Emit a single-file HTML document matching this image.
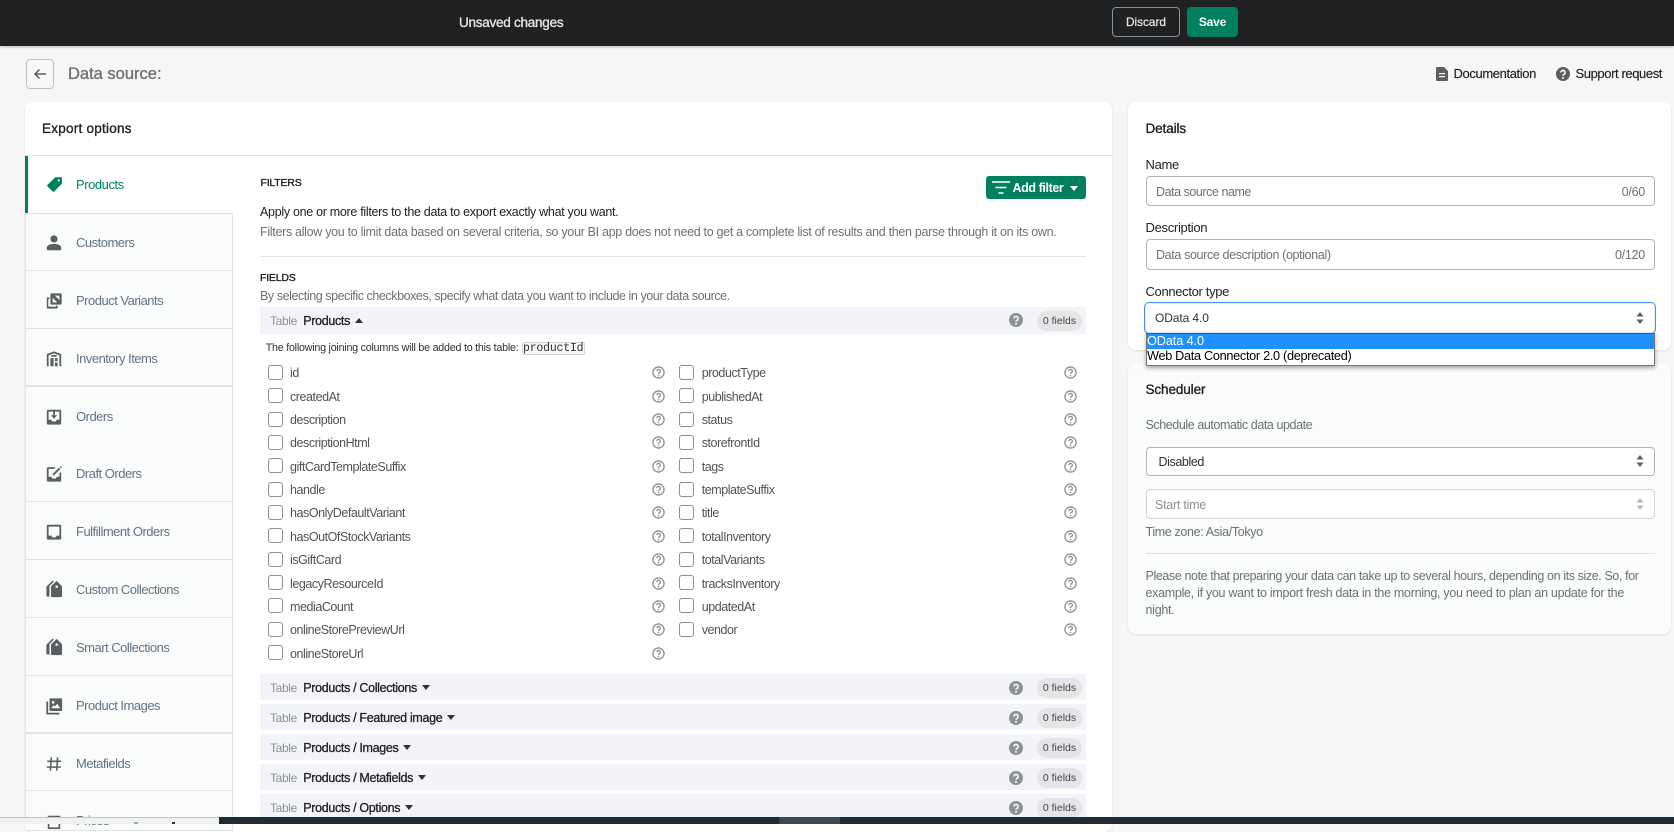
<!DOCTYPE html>
<html><head><meta charset="utf-8"><style>
html,body{margin:0;padding:0;width:1674px;height:824px;overflow:hidden;background:#f6f6f7;font-family:"Liberation Sans",sans-serif;font-size:13px;color:#202223}
*{box-sizing:border-box}
.a,.t,.r,.n,svg.i{position:absolute}
.t{white-space:nowrap;line-height:16px;letter-spacing:-.35px}
.m{-webkit-text-stroke:.35px currentColor}
.g{color:#6d7175}
.bar{left:0;top:0;width:1674px;height:46px;background:#202123;box-shadow:0 1px 3px rgba(0,0,0,.25)}
.card{background:#fff;border-radius:8px;box-shadow:0 1px 2px rgba(0,0,0,.1)}
.n{left:26px;width:207px;height:58px;background:#fafbfb;border:1px solid #e1e3e5;border-top:0;border-left:0}
.n span{position:absolute;left:50px;top:22px;line-height:16px;color:#637381;letter-spacing:-.5px;white-space:nowrap}
.n svg{position:absolute;left:19px;top:21px;width:18px;height:18px;fill:#5c5f62}
.r{height:16px;width:10px}
.l{left:267.6px}.q{left:679.3px}
.r i{position:absolute;left:0;top:-.5px;width:15px;height:15px;border:1px solid #8c9196;border-radius:3px;background:#fff}
.r span{position:absolute;left:22.4px;top:0;line-height:16px;white-space:nowrap;color:#4f5358;font-size:12.5px;letter-spacing:-.44px}
.r svg{position:absolute;top:1px;left:384.5px;width:13px;height:13px}
.th{left:259.5px;width:826.5px;background:#f3f4f8}
.th .x{position:absolute;left:10.5px;line-height:16px;color:#8c9196;font-size:12px;letter-spacing:-.35px}
.th .b{position:absolute;left:43.8px;line-height:16px;white-space:nowrap;color:#202223;letter-spacing:-.33px;font-size:12.5px;-webkit-text-stroke:.3px #202223}
.th .b b{display:inline-block;width:0;height:0;border:4px solid transparent;border-top:5px solid #303236;border-bottom:0;margin-left:5px;vertical-align:2px}
.th .b b.u{border-top:0;border-bottom:5px solid #303236}
.th svg{position:absolute;left:749px;width:14px;height:14px}
.th .p{position:absolute;left:777.5px;width:45px;height:20px;border-radius:10px;background:#e4e5e7;text-align:center;font-size:10.5px;line-height:20px;color:#44474a}
.inp{background:#fff;border:1px solid #aeb4b9;border-radius:4px}
.sa{position:absolute;width:8px;height:14px}
</style></head><body>
<svg width="0" height="0" style="position:absolute"><defs>
<symbol id="h" viewBox="0 0 14 14"><circle cx="7" cy="7" r="6" fill="none" stroke="#8c9196" stroke-width="1.4"/><path d="M5.2 5.6a1.9 1.9 0 1 1 2.8 1.6c-.7.4-1 .7-1 1.4" fill="none" stroke="#8c9196" stroke-width="1.3"/><circle cx="7" cy="10.4" r=".85" fill="#8c9196"/></symbol>
<symbol id="f" viewBox="0 0 14 14"><circle cx="7" cy="7" r="7" fill="#8c9196"/><path d="M4.9 5.5a2.1 2.1 0 1 1 3.2 1.8c-.7.4-1.1.7-1.1 1.500" fill="none" stroke="#fff" stroke-width="1.5"/><circle cx="7" cy="10.9" r="1" fill="#fff"/></symbol>
<symbol id="cc" viewBox="0 0 20 20"><path d="M8 1L1.500 7.500V17A1.500 1.500 0 0 0 3 18.500H5V6.500L10 1.500 9 1z"/><path d="M13 1l5.900 6v10.500a1.500 1.500 0 0 1-1.500 1.500H8.200a1.500 1.500 0 0 1-1.500-1.500V7zM13 6a1.400 1.400 0 1 0 0 2.800A1.400 1.400 0 0 0 13 6z" fill-rule="evenodd"/></symbol>
</defs></svg>

<div class="a bar"></div>
<div class="t m" style="left:459px;top:15px;color:#e3e4e6;font-size:13.5px;letter-spacing:-.25px">Unsaved changes</div>
<div class="a" style="left:1112px;top:7px;width:68px;height:30px;border:1px solid #8c9196;border-radius:4px;color:#e3e4e6;text-align:center;line-height:28px;font-size:11.8px;-webkit-text-stroke:.25px #e3e4e6">Discard</div>
<div class="a" style="left:1187px;top:7px;width:51px;height:30px;background:#008060;border-radius:4px;color:#fff;text-align:center;line-height:30px;font-size:12px;font-weight:bold;letter-spacing:-.2px">Save</div>

<div class="a" style="left:26px;top:59px;width:28px;height:30px;border:1px solid #babfc3;border-radius:4px;background:#f8f8f8"></div>
<svg class="i" style="left:32px;top:66px" width="16" height="16" viewBox="0 0 16 16"><path d="M14 8H3M7.500 3.500L3 8l4.500 4.500" fill="none" stroke="#5c5f62" stroke-width="1.500"/></svg>
<div class="t m g" style="left:68px;top:65px;font-size:16.500px;line-height:18px;letter-spacing:0">Data source:</div>

<svg class="i" style="left:1434px;top:66px" width="16" height="16" viewBox="0 0 16 16"><path d="M3 1h7l4 4v9a1 1 0 0 1-1 1H3a1 1 0 0 1-1-1V2a1 1 0 0 1 1-1zM5 7v1.300h6V7zM5 10v1.300h6V10z" fill="#5c5f62" fill-rule="evenodd"/></svg>
<div class="t" style="left:1453.500px;top:66px;letter-spacing:-.38px;-webkit-text-stroke:.15px #202223">Documentation</div>
<svg class="i" style="left:1556px;top:67px" width="14" height="14" viewBox="0 0 14 14"><circle cx="7" cy="7" r="7" fill="#5c5f62"/><path d="M4.900 5.500a2.100 2.100 0 1 1 3.200 1.800c-.7.4-1.100.7-1.100 1.500" fill="none" stroke="#fff" stroke-width="1.500"/><circle cx="7" cy="10.900" r="1" fill="#fff"/></svg>
<div class="t" style="left:1575.500px;top:66px;letter-spacing:-.4px;-webkit-text-stroke:.15px #202223">Support request</div>

<!-- Export card -->
<div class="a card" style="left:25px;top:102px;width:1087px;height:730px"></div>
<div class="t m" style="left:42px;top:121px;font-size:13.500px;letter-spacing:.25px">Export options</div>
<div class="a" style="left:25px;top:155px;width:1087px;height:1px;background:#e1e3e5"></div>
<div class="a" style="left:25px;top:156px;width:1px;height:661px;background:#e1e3e5"></div>

<!-- Sidebar -->
<div class="a" style="left:25px;top:156px;width:3px;height:57px;background:#008060"></div>
<svg class="i" style="left:46px;top:176px" width="17" height="17" viewBox="0 0 20 20"><path d="M11.500 1.500H18a.7.700 0 0 1 .7.7v6.500a1 1 0 0 1-.3.7l-9 9a1 1 0 0 1-1.400 0L1.600 12a1 1 0 0 1 0-1.400l9-8.800a1 1 0 0 1 .9-.3zM15 4a1.300 1.300 0 1 0 0 2.600A1.300 1.300 0 0 0 15 4z" fill="#008060" fill-rule="evenodd"/></svg>
<div class="t" style="left:76px;top:176.500px;color:#008060;letter-spacing:-.45px">Products</div>

<div class="n" style="top:213px;height:58px;border-top:1px solid #e1e3e5"><span style="top:21px">Customers</span><svg style="top:20px" viewBox="0 0 20 20"><circle cx="10" cy="5.500" r="4"/><path d="M3 18a1 1 0 0 1-1-1v-1.500C2 13 5 11 10 11s8 2 8 4.500V17a1 1 0 0 1-1 1z"/></svg></div>
<div class="n" style="top:271px"><span>Product Variants</span><svg viewBox="0 0 20 20"><path d="M7 1.500h10.500a1 1 0 0 1 1 1V13a1 1 0 0 1-1 1H7a1 1 0 0 1-1-1V2.500a1 1 0 0 1 1-1z"/><path d="M16 4v5l-5-5zM8.500 11.500v-5l5 5z" fill="#fafbfb"/><path d="M3 6h2v1.700H3.700v8.600h8.600V15H14v2.500a1 1 0 0 1-1 1H3a1 1 0 0 1-1-1V7a1 1 0 0 1 1-1z"/></svg></div>
<div class="n" style="top:329px;border-bottom-width:2px"><span>Inventory Items</span><svg viewBox="0 0 20 20"><path d="M10 1.500L18 4.500V18h-2V6L10 3.700 4 6v12H2V4.500zM6 9h3.500v9H6zM11 9h3v3.500h-3zM11 14h3v4h-3zM7 5.500h6V7.500H7z"/></svg></div>
<div class="n" style="top:387px"><span>Orders</span><svg viewBox="0 0 20 20"><path d="M3.500 2h13A1.500 1.500 0 0 1 18 3.500V17a1.500 1.500 0 0 1-1.500 1.500h-13A1.500 1.500 0 0 1 2 17V3.500A1.500 1.500 0 0 1 3.500 2zM4 4v9h3l1 2h4l1-2h3V4z" fill-rule="evenodd"/><path d="M9 3h2v5h2.500L10 12 6.500 8H9z"/></svg></div>
<div class="n" style="top:444px"><span>Draft Orders</span><svg viewBox="0 0 20 20"><path d="M3.500 2.500H12L10 4.500H4V13h3l1 2h4l1-2h3V9.500l2-2V17a1.500 1.500 0 0 1-1.500 1.500h-13A1.500 1.500 0 0 1 2 17V4a1.500 1.500 0 0 1 1.500-1.500zM15.500 3L17 4.500 10 11.500H8.500V10zM17.500 1l1.500 1.500-1 1L16.500 2z" fill-rule="evenodd"/></svg></div>
<div class="n" style="top:502px"><span>Fulfillment Orders</span><svg viewBox="0 0 20 20"><path d="M3.500 2h13A1.500 1.500 0 0 1 18 3.500V17a1.500 1.500 0 0 1-1.500 1.500h-13A1.500 1.500 0 0 1 2 17V3.500A1.500 1.500 0 0 1 3.500 2zM4 4v10h3l1 2h4l1-2h3V4z" fill-rule="evenodd"/></svg></div>
<div class="n" style="top:560px"><span>Custom Collections</span><svg style="top:20px"><use href="#cc"/></svg></div>
<div class="n" style="top:618px"><span>Smart Collections</span><svg style="top:20px"><use href="#cc"/></svg></div>
<div class="n" style="top:676px;border-bottom-width:2px"><span>Product Images</span><svg viewBox="0 0 20 20"><path d="M6 1.500h12a1 1 0 0 1 1 1v12a1 1 0 0 1-1 1H6a1 1 0 0 1-1-1v-12a1 1 0 0 1 1-1zM7 12.500h10l-3.500-5-2.500 3-1.500-1.500zM9 4.500a1.500 1.500 0 1 0 0 3 1.500 1.500 0 0 0 0-3zM1.500 5h2v12.500H16v2H2.500a1 1 0 0 1-1-1z" fill-rule="evenodd"/></svg></div>
<div class="n" style="top:734px;height:57px"><span>Metafields</span><svg viewBox="0 0 20 20"><path d="M7 2.500l-1 15M14 2.500l-1 15M2.500 7h15.500M2 13.500h15.500" fill="none" stroke="#5c5f62" stroke-width="1.700"/></svg></div>
<div class="n" style="top:791px;height:40px"><span>Prices</span><svg viewBox="0 0 20 20"><path d="M4 5h12v13H4z" fill="none" stroke="#5c5f62" stroke-width="1.800"/></svg></div>

<!-- Filters -->
<div class="t m" style="left:260.500px;top:175px;font-size:10.500px;letter-spacing:-.2px">FILTERS</div>
<div class="a" style="left:986px;top:176px;width:100px;height:23px;background:#008060;border-radius:3px"></div>
<svg class="i" style="left:992px;top:181px" width="18" height="13" viewBox="0 0 18 13"><path d="M0 1h18M3.500 6.500h11M6.500 12h5" stroke="#fff" stroke-width="1.600" fill="none"/></svg>
<div class="t" style="left:1012.500px;top:179.500px;color:#fff;font-weight:bold;font-size:12.500px;letter-spacing:-.4px">Add filter</div>
<div class="a" style="left:1070px;top:186px;border:4px solid transparent;border-top:5px solid #fff;border-bottom:0"></div>
<div class="t" style="left:260px;top:204px;letter-spacing:-.3px;font-size:12.500px">Apply one or more filters to the data to export exactly what you want.</div>
<div class="t g" style="left:260px;top:224px;letter-spacing:-.305px;font-size:12.500px">Filters allow you to limit data based on several criteria, so your BI app does not need to get a complete list of results and then parse through it on its own.</div>
<div class="a" style="left:260px;top:256px;width:826px;height:1px;background:#e1e3e5"></div>
<div class="t m" style="left:260px;top:269.500px;font-size:10.500px;letter-spacing:-.2px">FIELDS</div>
<div class="t g" style="left:260px;top:288px;letter-spacing:-.43px;font-size:12.500px">By selecting specific checkboxes, specify what data you want to include in your data source.</div>

<div class="a th" style="top:307px;height:27px"><span class="x" style="top:5.500px">Table</span><span class="b" style="top:5.500px">Products<b class="u"></b></span><svg style="top:6px"><use href="#f"/></svg><span class="p" style="top:3.700px">0 fields</span></div>
<div class="t" style="left:265.700px;top:340px;font-size:10.700px;letter-spacing:-.22px;color:#303236">The following joining columns will be added to this table:</div>
<div class="a" style="left:521.700px;top:341.500px;width:63px;height:13px;background:#f6f6f7;border:1px solid #d2d5d8;border-radius:2px;font:11.500px/11px 'Liberation Mono',monospace;text-align:center;letter-spacing:-.2px;color:#303236">productId</div>

<div class="r l" style="top:365.300px"><i></i><span>id</span><svg><use href="#h"/></svg></div>
<div class="r l" style="top:388.700px"><i></i><span>createdAt</span><svg><use href="#h"/></svg></div>
<div class="r l" style="top:412px"><i></i><span>description</span><svg><use href="#h"/></svg></div>
<div class="r l" style="top:435.400px"><i></i><span>descriptionHtml</span><svg><use href="#h"/></svg></div>
<div class="r l" style="top:458.700px"><i></i><span>giftCardTemplateSuffix</span><svg><use href="#h"/></svg></div>
<div class="r l" style="top:482.100px"><i></i><span>handle</span><svg><use href="#h"/></svg></div>
<div class="r l" style="top:505.400px"><i></i><span>hasOnlyDefaultVariant</span><svg><use href="#h"/></svg></div>
<div class="r l" style="top:528.800px"><i></i><span>hasOutOfStockVariants</span><svg><use href="#h"/></svg></div>
<div class="r l" style="top:552.100px"><i></i><span>isGiftCard</span><svg><use href="#h"/></svg></div>
<div class="r l" style="top:575.500px"><i></i><span>legacyResourceId</span><svg><use href="#h"/></svg></div>
<div class="r l" style="top:598.800px"><i></i><span>mediaCount</span><svg><use href="#h"/></svg></div>
<div class="r l" style="top:622.200px"><i></i><span>onlineStorePreviewUrl</span><svg><use href="#h"/></svg></div>
<div class="r l" style="top:645.500px"><i></i><span>onlineStoreUrl</span><svg><use href="#h"/></svg></div>

<div class="r q" style="top:365.300px"><i></i><span>productType</span><svg><use href="#h"/></svg></div>
<div class="r q" style="top:388.700px"><i></i><span>publishedAt</span><svg><use href="#h"/></svg></div>
<div class="r q" style="top:412px"><i></i><span>status</span><svg><use href="#h"/></svg></div>
<div class="r q" style="top:435.400px"><i></i><span>storefrontId</span><svg><use href="#h"/></svg></div>
<div class="r q" style="top:458.700px"><i></i><span>tags</span><svg><use href="#h"/></svg></div>
<div class="r q" style="top:482.100px"><i></i><span>templateSuffix</span><svg><use href="#h"/></svg></div>
<div class="r q" style="top:505.400px"><i></i><span>title</span><svg><use href="#h"/></svg></div>
<div class="r q" style="top:528.800px"><i></i><span>totalInventory</span><svg><use href="#h"/></svg></div>
<div class="r q" style="top:552.100px"><i></i><span>totalVariants</span><svg><use href="#h"/></svg></div>
<div class="r q" style="top:575.500px"><i></i><span>tracksInventory</span><svg><use href="#h"/></svg></div>
<div class="r q" style="top:598.800px"><i></i><span>updatedAt</span><svg><use href="#h"/></svg></div>
<div class="r q" style="top:622.200px"><i></i><span>vendor</span><svg><use href="#h"/></svg></div>

<div class="a th" style="top:674px;height:26px"><span class="x" style="top:6px">Table</span><span class="b" style="top:6px">Products / Collections<b></b></span><svg style="top:7px"><use href="#f"/></svg><span class="p" style="top:4px">0 fields</span></div>
<div class="a th" style="top:704px;height:26px"><span class="x" style="top:6px">Table</span><span class="b" style="top:6px">Products / Featured image<b></b></span><svg style="top:7px"><use href="#f"/></svg><span class="p" style="top:4px">0 fields</span></div>
<div class="a th" style="top:734px;height:26px"><span class="x" style="top:6px">Table</span><span class="b" style="top:6px">Products / Images<b></b></span><svg style="top:7px"><use href="#f"/></svg><span class="p" style="top:4px">0 fields</span></div>
<div class="a th" style="top:764px;height:26px"><span class="x" style="top:6px">Table</span><span class="b" style="top:6px">Products / Metafields<b></b></span><svg style="top:7px"><use href="#f"/></svg><span class="p" style="top:4px">0 fields</span></div>
<div class="a th" style="top:794px;height:26px"><span class="x" style="top:6px">Table</span><span class="b" style="top:6px">Products / Options<b></b></span><svg style="top:7px"><use href="#f"/></svg><span class="p" style="top:4px">0 fields</span></div>

<!-- Details -->
<div class="a card" style="left:1128px;top:102px;width:543px;height:248px"></div>
<div class="t m" style="left:1145.500px;top:121px;font-size:13.500px;letter-spacing:-.1px">Details</div>
<div class="t" style="left:1145.500px;top:157px;letter-spacing:-.3px">Name</div>
<div class="a inp" style="left:1145.500px;top:176px;width:509px;height:30px"></div>
<div class="t g" style="left:1156px;top:184px;font-size:12.500px;letter-spacing:-.45px">Data source name</div>
<div class="t g" style="right:29px;top:183.500px;font-size:12.500px;letter-spacing:-.25px">0/60</div>
<div class="t" style="left:1145.500px;top:220px;letter-spacing:-.3px">Description</div>
<div class="a inp" style="left:1145.500px;top:239px;width:509px;height:31px"></div>
<div class="t g" style="left:1156px;top:247px;font-size:12.500px;letter-spacing:-.36px">Data source description (optional)</div>
<div class="t g" style="right:29px;top:247px;font-size:12.500px;letter-spacing:-.25px">0/120</div>
<div class="t" style="left:1145.500px;top:284px;letter-spacing:-.33px">Connector type</div>
<div class="a" style="left:1143.500px;top:301.500px;width:512px;height:32px;background:#fff;border:1.500px solid #458fff;border-radius:5px;box-shadow:inset 0 0 0 1px #e8f0fb"></div>
<div class="t" style="left:1155px;top:310px;font-size:12px;letter-spacing:-.1px;color:#303236">OData 4.0</div>
<svg class="sa" style="left:1636px;top:311px" viewBox="0 0 8 14"><path d="M4 1l3.500 4.500h-7zM4 13L.5 8.500h7z" fill="#5c5f62"/></svg>

<!-- Scheduler -->
<div class="a card" style="left:1128px;top:363px;width:543px;height:271px;background:#fafbfb"></div>
<div class="a" style="left:1146px;top:332.500px;width:508.500px;height:33.500px;background:#fff;border:1px solid #767676;border-top-color:#555;box-shadow:0 2px 4px rgba(0,0,0,.35)"></div>
<div class="a" style="left:1147px;top:333.500px;width:506.500px;height:15px;background:#1e90ff"></div>
<div class="t" style="left:1147px;top:333.500px;font-size:12.700px;line-height:15px;color:#fff;letter-spacing:-.1px">OData 4.0</div>
<div class="t" style="left:1147px;top:348.500px;font-size:12.700px;line-height:15px;color:#000;letter-spacing:-.3px">Web Data Connector 2.0 (deprecated)</div>
<div class="t m" style="left:1145.500px;top:382px;font-size:13.500px;letter-spacing:-.1px">Scheduler</div>
<div class="t g" style="left:1145.500px;top:417px;font-size:12.500px;letter-spacing:-.42px">Schedule automatic data update</div>
<div class="a inp" style="left:1145.500px;top:446.500px;width:509px;height:29px"></div>
<div class="t" style="left:1158.500px;top:453.500px;font-size:12.500px;letter-spacing:-.4px;color:#303236">Disabled</div>
<svg class="sa" style="left:1636px;top:454px" viewBox="0 0 8 14"><path d="M4 1l3.500 4.500h-7zM4 13L.5 8.500h7z" fill="#5c5f62"/></svg>
<div class="a inp" style="left:1145.500px;top:489px;width:509px;height:29.500px;border-color:#d2d5d8"></div>
<div class="t" style="left:1155px;top:496.500px;font-size:12.500px;letter-spacing:-.25px;color:#8c9196">Start time</div>
<svg class="sa" style="left:1636px;top:497px" viewBox="0 0 8 14"><path d="M4 1l3.500 4.500h-7zM4 13L.5 8.500h7z" fill="#babec3"/></svg>
<div class="t g" style="left:1145.500px;top:524px;font-size:12.500px;letter-spacing:-.35px">Time zone: Asia/Tokyo</div>
<div class="a" style="left:1145.500px;top:553px;width:509px;height:1px;background:#dfe1e3"></div>
<div class="t g" style="left:1145.500px;top:568px;font-size:12.500px;letter-spacing:-.39px">Please note that preparing your data can take up to several hours, depending on its size. So, for</div>
<div class="t g" style="left:1145.500px;top:585px;font-size:12.500px;letter-spacing:-.29px">example, if you want to import fresh data in the morning, you need to plan an update for the</div>
<div class="t g" style="left:1145.500px;top:602px;font-size:12.500px;letter-spacing:-.27px">night.</div>

<!-- bottom strip -->
<div class="a" style="left:0;top:817px;width:219px;height:7px;background:#f1f1f1;border-top:1px solid #c4c4c4"></div>
<div class="a" style="left:134px;top:822px;width:4px;height:2px;background:#8fb3c0"></div>
<div class="a" style="left:172px;top:822px;width:3px;height:2px;background:#333"></div>
<div class="a" style="left:219px;top:817px;width:1455px;height:7px;background:#1f2d33"></div>
<div class="a" style="left:779px;top:817px;width:61px;height:7px;background:#3d4a50"></div>
</body></html>
